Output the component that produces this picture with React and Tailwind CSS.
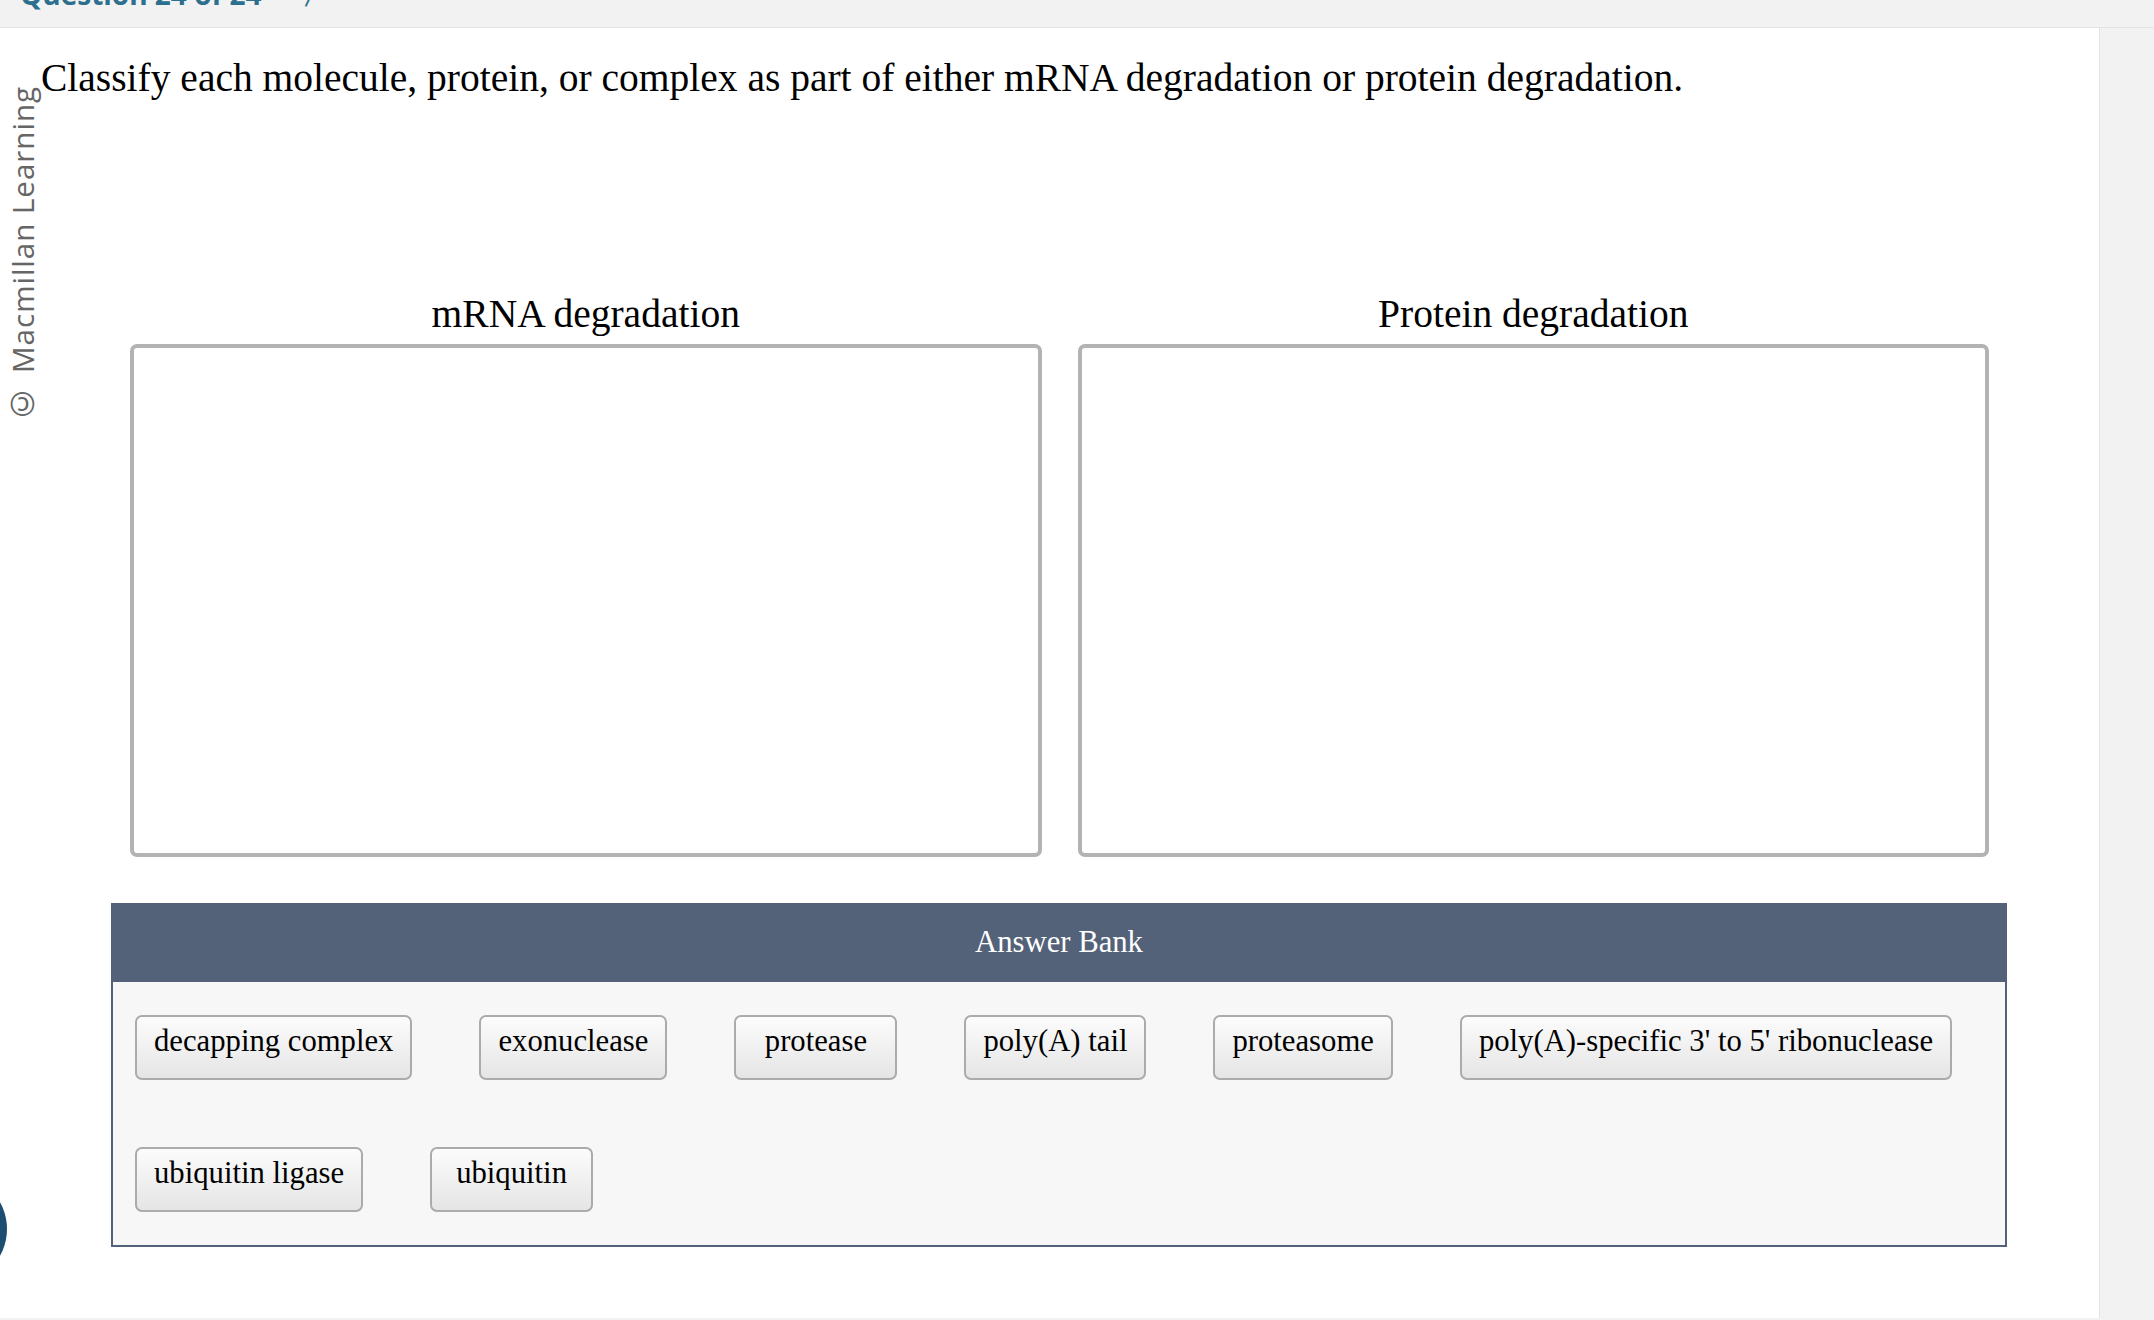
import React from 'react';

const serif = "font-['Liberation_Serif','Times_New_Roman',serif]";

const answers = [
    'decapping complex',
    'exonuclease',
    'protease',
    'poly(A) tail',
    'proteasome',
    "poly(A)-specific 3' to 5' ribonuclease",
    'ubiquitin ligase',
    'ubiquitin',
];

const DropZone = ({ title }) => (
    <div className="flex flex-col">
        <h2 className={`${serif} text-[39.5px] leading-[46px] text-black text-center font-normal`}>{title}</h2>
        <div className="mt-[7px] h-[513px] border-4 border-[#b3b3b3] rounded-[7px] bg-white"></div>
    </div>
);

const Chip = ({ label }) => (
    <div className={`${serif} h-[65px] min-w-[163px] px-[17px] pb-[12px] flex items-center justify-center border-2 border-[#ababab] rounded-[7px] bg-linear-to-b from-[#fcfcfc] to-[#e5e5e5] text-[30.7px] leading-[35px] text-black whitespace-nowrap`}>
        {label}
    </div>
);

export default function App() {
    return (
        <div className="w-[2154px] h-[1320px] bg-[#f2f2f2] flex flex-col overflow-hidden">
            {/* barra superior, el titulo queda cortado */}
            <div className="h-[28px] shrink-0 border-b border-[#e4e4e4] overflow-hidden">
                <div className="flex items-center gap-[40px] pl-[20px] mt-[-21px] font-['Open_Sans',sans-serif] font-bold text-[28px] leading-[30px] text-[#2d6f8e]">
                    <span>Question 24 of 24</span>
                    <span className="text-[26px]">〉</span>
                </div>
            </div>

            <div className="flex flex-1">
                <div className="relative w-[2100px] h-[1290px] bg-white border-r border-[#e3e3e3] overflow-hidden">
                    <div className="absolute left-[4px] top-[58px] [writing-mode:vertical-rl] rotate-180 font-['Open_Sans',sans-serif] font-medium text-[29.5px] leading-[38px] tracking-[1px] text-[#666666] whitespace-nowrap">
                        <span className="text-[32px]">©</span> Macmillan Learning
                    </div>
                    <div className="absolute left-[-103px] top-[1146px] w-[110px] h-[110px] rounded-full bg-[#1e4d72]"></div>

                    <p className={`${serif} pl-[41px] pt-[27px] text-[39.5px] leading-[46px] text-black`}>
                        Classify each molecule, protein, or complex as part of either mRNA degradation or protein degradation.
                    </p>

                    <div className="ml-[130px] w-[1859px] mt-[190px] grid grid-cols-2 gap-[36px]">
                        <DropZone title="mRNA degradation" />
                        <DropZone title="Protein degradation" />
                    </div>

                    <div className="ml-[111px] w-[1896px] mt-[46px]">
                        <div className={`${serif} h-[79px] bg-[#536279] flex items-center justify-center text-white text-[30.7px]`}>
                            Answer Bank
                        </div>
                        <div className="bg-[#f7f7f7] border-x-2 border-b-2 border-[#536279] pl-[22px] pr-[20px] pt-[33px] pb-[33px] flex flex-wrap gap-x-[67px] gap-y-[67px]">
                            {answers.map((a) => (
                                <Chip key={a} label={a} />
                            ))}
                        </div>
                    </div>
                </div>
            </div>
        </div>
    );
}
